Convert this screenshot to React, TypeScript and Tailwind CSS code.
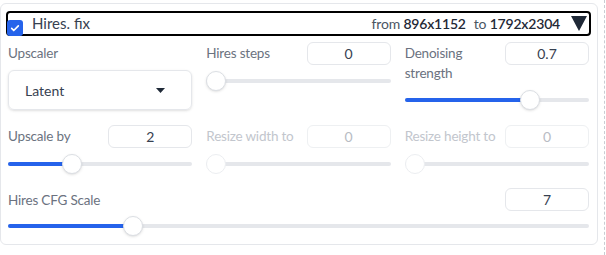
import React from "react";

const font = { fontFamily: "Lato, 'Noto Sans', sans-serif" };

type SliderProps = { pct: number; disabled?: boolean };

// thumb center and blue fill end at the same spot
const Slider = ({ pct, disabled }: SliderProps) => {
  const pos = `calc(10px + ${pct} * (100% - 20px) / 100)`;
  return (
    <div className="relative h-[20px] w-full">
      <div className="absolute left-0 right-0 top-[8px] h-[4px] rounded-full bg-[#e5e7eb]" />
      {pct > 0 && (
        <div className="absolute left-0 top-[8px] h-[4px] rounded-full bg-[#2563eb]" style={{ width: pos }} />
      )}
      <div
        className={`absolute top-0 h-[20px] w-[20px] -translate-x-1/2 rounded-full border bg-white ${
          disabled ? "border-[#eceef1]" : "border-[#dcdfe4] shadow-sm"
        }`}
        style={{ left: pos }}
      />
    </div>
  );
};

const NumBox = ({ value, disabled }: { value: string; disabled?: boolean }) => (
  <div
    className={`flex h-[23px] w-[84px] shrink-0 items-center justify-center rounded-md border text-[14px] ${
      disabled ? "border-[#eef0f2] text-[#b8bcc4]" : "border-[#e5e7eb] text-[#374151]"
    }`}
  >
    {value}
  </div>
);

const labelCls = "text-[13.5px] leading-[20px] tracking-[-0.2px]";

const Field = ({
  label,
  value,
  pct,
  disabled,
}: {
  label: string;
  value: string;
  pct: number;
  disabled?: boolean;
}) => (
  <div className="flex flex-col">
    <div className="flex items-start justify-between">
      <span className={`mt-[1px] ${labelCls} ${disabled ? "text-[#c2c6cd]" : "text-[#6b7280]"}`}>{label}</span>
      <NumBox value={value} disabled={disabled} />
    </div>
    <div className="mt-[6px]">
      <Slider pct={pct} disabled={disabled} />
    </div>
  </div>
);

export default function App() {
  return (
    <div className="flex h-[255px] w-[606px] bg-white" style={font}>
      <div className="mt-[3px] h-[242px] w-[598px] rounded-md border border-[#e5e7eb] pl-[7px] pr-[8px] pt-[7px]">
        {/* header */}
        <div className="mx-[-2px] flex h-[25px] items-center justify-between rounded-[4px] border-2 border-black pr-[2px]">
          <div className="flex items-center">
            <div className="ml-[-1px] mt-[8px] flex h-[16px] w-[16px] items-center justify-center rounded-[3px] bg-[#2563eb]">
              <svg width="10" height="10" viewBox="0 0 12 12" fill="none">
                <path d="M2 6.5l2.5 2.5L10 3.5" stroke="white" strokeWidth="2" strokeLinecap="round" strokeLinejoin="round" />
              </svg>
            </div>
            <span className="ml-[9px] text-[15px] text-[#374151]">Hires. fix</span>
          </div>
          <div className="flex items-center">
            <span className="text-[14px] tracking-[-0.2px] text-[#4b5563]">
              from <span className="font-semibold text-[#1f2937]">896x1152</span>
              <span className="ml-[8px]">to</span> <span className="font-semibold text-[#1f2937]">1792x2304</span>
            </span>
            <svg className="ml-[11px]" width="16" height="15" viewBox="0 0 16 15">
              <path d="M0 0h16L8 15z" fill="#1f2937" />
            </svg>
          </div>
        </div>

        {/* row 1 */}
        <div className="mt-[6px] grid grid-cols-3 gap-x-[14px]">
          <div className="flex flex-col">
            <span className={`mt-[1px] ${labelCls} text-[#6b7280]`}>Upscaler</span>
            <div className="mt-[7px] flex h-[40px] items-center justify-between rounded-md border border-[#e5e7eb] pl-[16px] pr-[26px] text-[14px] text-[#374151] shadow-sm">
              <span>Latent</span>
              <svg width="9" height="5" viewBox="0 0 9 5">
                <path d="M0 0h9L4.5 5z" fill="#1f2937" />
              </svg>
            </div>
          </div>
          <Field label="Hires steps" value="0" pct={0} />
          <div className="flex flex-col">
            <div className="flex items-start justify-between">
              <span className={`mt-[1px] ${labelCls} text-[#6b7280]`}>
                Denoising
                <br />
                strength
              </span>
              <NumBox value="0.7" />
            </div>
            <div className="mt-[7px]">
              <Slider pct={70} />
            </div>
          </div>
        </div>

        {/* row 2 */}
        <div className="mt-[15px] grid grid-cols-3 gap-x-[14px]">
          <Field label="Upscale by" value="2" pct={33} />
          <Field label="Resize width to" value="0" pct={0} disabled />
          <Field label="Resize height to" value="0" pct={0} disabled />
        </div>

        {/* row 3 */}
        <div className="mt-[14px] flex flex-col">
          <div className="flex items-center justify-between">
            <span className={`${labelCls} text-[#6b7280]`}>Hires CFG Scale</span>
            <NumBox value="7" />
          </div>
          <div className="mt-[5px]">
            <Slider pct={20.5} />
          </div>
        </div>
      </div>
      <div className="ml-[6px] h-full border-l border-dashed border-[#c9cdd3]" />
    </div>
  );
}
